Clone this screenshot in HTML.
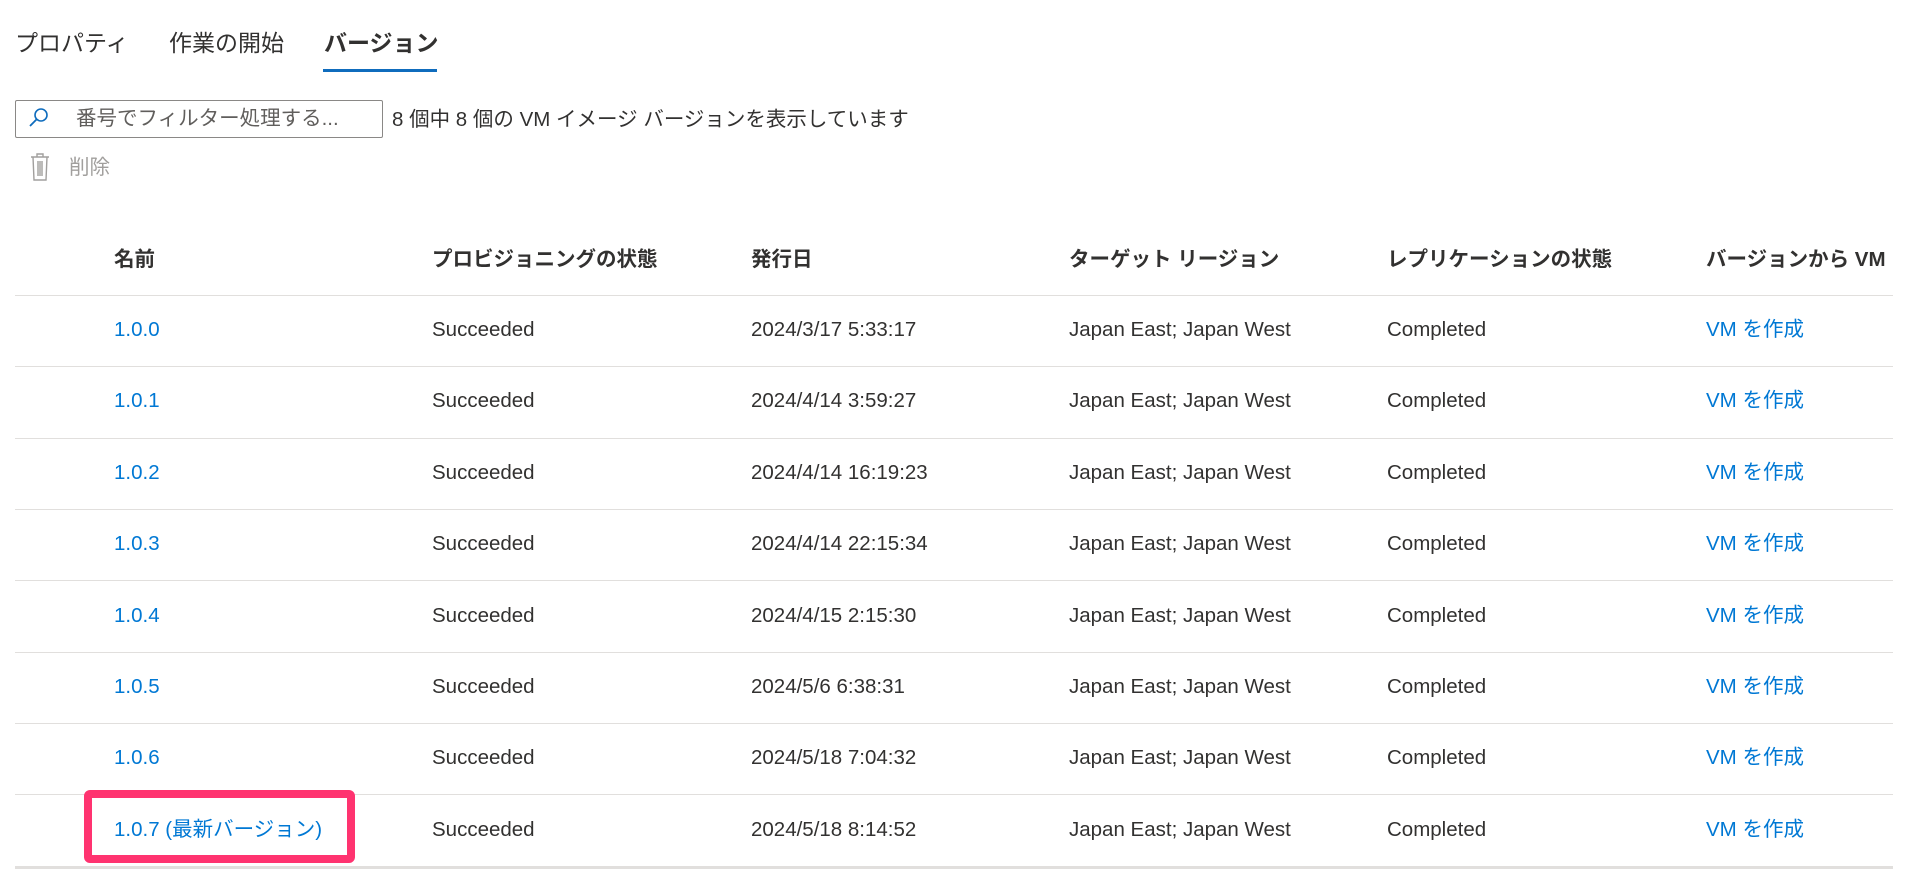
<!DOCTYPE html>
<html><head><meta charset="utf-8"><style>
body{margin:0;width:1920px;height:870px;background:#fff;font-family:"Segoe UI","Liberation Sans","Noto Sans CJK JP",sans-serif;color:#323130;position:relative;overflow:hidden}
.a{position:absolute;white-space:nowrap}
.tab{font-size:23px;top:28px;line-height:30px}
.t{font-size:20.5px;line-height:26px}
.link{color:#0078d4}
.line{position:absolute;left:15px;width:1878px;height:1px;background:#e1dfdd}
</style></head><body>
<div class="a tab" style="left:15px">プロパティ</div>
<div class="a tab" style="left:169px">作業の開始</div>
<div class="a tab" style="left:324px;font-weight:bold">バージョン</div>
<div class="a" style="left:323px;top:69px;width:114px;height:3px;background:#0f6cbd"></div>
<div class="a" style="left:15px;top:100px;width:366px;height:36px;border:1px solid #8a8886;border-radius:2px"></div>
<svg class="a" style="left:28px;top:107px" width="22" height="22" viewBox="0 0 22 22"><circle cx="13" cy="8" r="6" fill="none" stroke="#0f6cbd" stroke-width="1.6"/><line x1="8.7" y1="12.3" x2="2" y2="19" stroke="#0f6cbd" stroke-width="1.8"/></svg>
<div class="a t" style="left:76px;top:106px;color:#605e5c">番号でフィルター処理する...</div>
<div class="a t" style="left:392px;top:107px">8 個中 8 個の VM イメージ バージョンを表示しています</div>
<svg class="a" style="left:30px;top:152px" width="20" height="30" viewBox="0 0 20 30"><g fill="none" stroke="#a19f9d" stroke-width="1.4"><path d="M1 5h18M7 5V2h6v3M3 5l1 23h12l1-23M8 9v15M10 9v15M12 9v15"/></g></svg>
<div class="a t" style="left:69px;top:155px;color:#a19f9d">削除</div>

<div class="a t" style="top:247px;left:114px;font-weight:bold">名前</div>
<div class="a t" style="top:247px;left:432px;font-weight:bold">プロビジョニングの状態</div>
<div class="a t" style="top:247px;left:751px;font-weight:bold">発行日</div>
<div class="a t" style="top:247px;left:1069px;font-weight:bold">ターゲット リージョン</div>
<div class="a t" style="top:247px;left:1387px;font-weight:bold">レプリケーションの状態</div>
<div class="a t" style="top:247px;left:1706px;font-weight:bold">バージョンから VM</div>

<div class="line" style="top:295px"></div>
<div class="line" style="top:366px"></div>
<div class="line" style="top:438px"></div>
<div class="line" style="top:509px"></div>
<div class="line" style="top:580px"></div>
<div class="line" style="top:652px"></div>
<div class="line" style="top:723px"></div>
<div class="line" style="top:794px"></div>
<div class="line" style="top:866px;height:3px"></div>

<div id="rows"></div>
<div class="a" style="left:84px;top:790px;width:255px;height:57px;border:8px solid #ff3370;border-radius:6px"></div>
<script>
var d=[["1.0.0","2024/3/17 5:33:17"],["1.0.1","2024/4/14 3:59:27"],["1.0.2","2024/4/14 16:19:23"],["1.0.3","2024/4/14 22:15:34"],["1.0.4","2024/4/15 2:15:30"],["1.0.5","2024/5/6 6:38:31"],["1.0.6","2024/5/18 7:04:32"],["1.0.7 (最新バージョン)","2024/5/18 8:14:52"]];
var h="";d.forEach(function(r,i){var y=317+i*71.4;
h+='<div class="a t link" style="top:'+y+'px;left:114px">'+r[0]+'</div><div class="a t" style="top:'+y+'px;left:432px">Succeeded</div><div class="a t" style="top:'+y+'px;left:751px">'+r[1]+'</div><div class="a t" style="top:'+y+'px;left:1069px">Japan East; Japan West</div><div class="a t" style="top:'+y+'px;left:1387px">Completed</div><div class="a t link" style="top:'+y+'px;left:1706px">VM を作成</div>';});
document.getElementById("rows").innerHTML=h;
</script>
</body></html>
